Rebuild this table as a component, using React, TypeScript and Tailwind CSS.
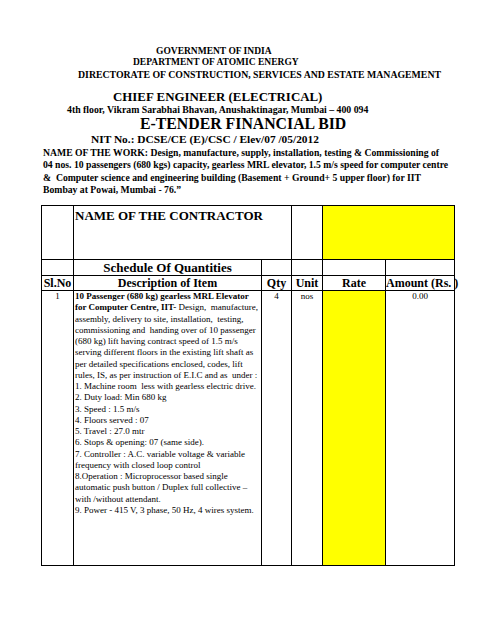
const serif = { fontFamily: '"Liberation Serif", "Times New Roman", serif' }

const cell = "border border-black p-0 align-top"

export default function App() {
  return (
    <div style={serif} className="w-[495px] h-[640px] bg-white text-black overflow-hidden pt-[45px]">
      {/* letterhead */}
      <div className="font-bold">
        <div className="h-[12px] leading-[12px] text-[9.5px] pl-[156px] whitespace-nowrap">GOVERNMENT OF INDIA</div>
        <div className="h-[11px] leading-[11px] text-[9.5px] pl-[133px] whitespace-nowrap">DEPARTMENT OF ATOMIC ENERGY</div>
        <div className="h-[13px] leading-[13px] text-[9.8px] pl-[78px] whitespace-nowrap">
          DIRECTORATE OF CONSTRUCTION, SERVICES AND ESTATE MANAGEMENT
        </div>
        <div className="mt-[8px] h-[16px] leading-[16px] text-[12.9px] pl-[113px] whitespace-nowrap">CHIEF ENGINEER (ELECTRICAL)</div>
        <div className="h-[10px] leading-[10px] text-[9.8px] pl-[67px] whitespace-nowrap">
          4th floor, Vikram Sarabhai Bhavan, Anushaktinagar, Mumbai – 400 094
        </div>
        <div className="h-[18px] leading-[18px] text-[15.8px] pl-[140px] whitespace-nowrap">E-TENDER FINANCIAL BID</div>
        <div className="mt-[1px] h-[10px] leading-[10px] text-[11.4px] pl-[91px] whitespace-nowrap">NIT No.: DCSE/CE (E)/CSC / Elev/07 /05/2012</div>
        <p className="mt-[3px] pl-[43px] text-[9.7px] leading-[12.3px] whitespace-nowrap">
          NAME OF THE WORK: Design, manufacture, supply, installation, testing &amp; Commissioning of
          <br />
          04 nos. 10 passengers (680 kgs) capacity, gearless MRL elevator, 1.5 m/s speed for computer centre
          <br />
          &amp;&nbsp; Computer science and engineering building (Basement + Ground+ 5 upper floor) for IIT
          <br />
          Bombay at Powai, Mumbai - 76.”
        </p>
      </div>

      {/* schedule table */}
      <table className="mt-[9px] ml-[41px] w-[413px] table-fixed border-collapse">
        <colgroup>
          <col className="w-[32px]" />
          <col className="w-[188px]" />
          <col className="w-[30px]" />
          <col className="w-[31px]" />
          <col className="w-[63px]" />
          <col className="w-[69px]" />
        </colgroup>
        <tbody>
          <tr className="h-[54px]">
            <td className={cell}></td>
            <td colSpan={2} className={cell}>
              <div className="pl-[1px] pt-[3px] text-[13px] leading-[14px] font-bold whitespace-nowrap">NAME OF THE CONTRACTOR</div>
            </td>
            <td className={cell}></td>
            <td colSpan={2} className={`${cell} bg-[#ffff00]`}></td>
          </tr>
          <tr className="h-[15px]">
            <td className={cell}></td>
            <td className={`${cell} text-center align-bottom`}>
              <div className="text-[13px] leading-[15px] font-bold whitespace-nowrap">Schedule Of Quantities</div>
            </td>
            <td className={cell}></td>
            <td className={cell}></td>
            <td className={cell}></td>
            <td className={cell}></td>
          </tr>
          <tr className="h-[14px] text-[12px] leading-[14px] font-bold text-center">
            <td className={`${cell} whitespace-nowrap`}>Sl.No</td>
            <td className={cell}>Description of Item</td>
            <td className={cell}>Qty</td>
            <td className={cell}>Unit</td>
            <td className={cell}>Rate</td>
            <td className={`${cell} whitespace-nowrap`}>Amount (Rs. )</td>
          </tr>
          <tr className="h-[275px] text-[9px] leading-[11.25px]">
            <td className={`${cell} text-center`}>1</td>
            <td className={`${cell} pl-[1px]`}>
              <div className="whitespace-nowrap">
                <b>10 Passenger (680 kg) gearless MRL Elevator</b>
                <br />
                <b>for Computer Centre, IIT-</b> Design,&nbsp; manufacture,
                <br />
                assembly, delivery to site, installation,&nbsp; testing,
                <br />
                commissioning and&nbsp; handing over of 10 passenger
                <br />
                (680 kg) lift having contract speed of 1.5 m/s
                <br />
                serving different floors in the existing lift shaft as
                <br />
                per detailed specifications enclosed, codes, lift
                <br />
                rules, IS, as per instruction of E.I.C and as&nbsp; under :
                <br />
                1. Machine room&nbsp; less with gearless electric drive.
                <br />
                2. Duty load: Min 680 kg
                <br />
                3. Speed : 1.5 m/s
                <br />
                4. Floors served : 07
                <br />
                5. Travel : 27.0 mtr
                <br />
                6. Stops &amp; opening: 07 (same side).
                <br />
                7. Controller : A.C. variable voltage &amp; variable
                <br />
                frequency with closed loop control
                <br />
                8.Operation : Microprocessor based single
                <br />
                automatic push button / Duplex full collective –
                <br />
                with /without attendant.
                <br />
                9. Power - 415 V, 3 phase, 50 Hz, 4 wires system.
              </div>
            </td>
            <td className={`${cell} text-center`}>4</td>
            <td className={`${cell} text-center`}>nos</td>
            <td className={`${cell} bg-[#ffff00]`}></td>
            <td className={`${cell} text-center`}>0.00</td>
          </tr>
        </tbody>
      </table>
    </div>
  )
}
